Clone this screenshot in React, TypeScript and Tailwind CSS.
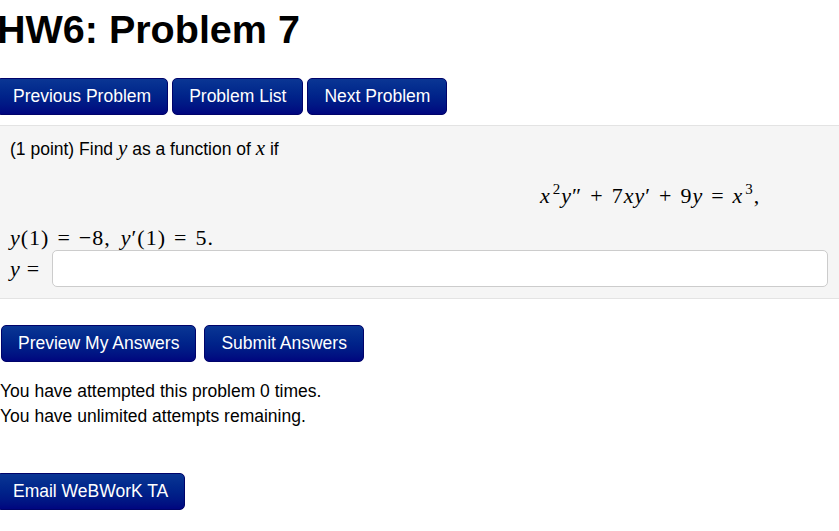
import React from "react";

const btn =
  "h-[37px] px-[16px] flex items-center rounded-[5px] border border-[#00036a] bg-gradient-to-b from-[#0b3694] to-[#00057f] text-white text-[17.5px] leading-[25px] whitespace-nowrap";

const math = "font-['Liberation_Serif',serif] text-[22px] tracking-[1px] whitespace-nowrap";

function V({ c }: { c: string }) {
  return <span className="italic">{c}</span>;
}

function Sup({ c }: { c: string }) {
  return <span className="relative -top-[9px] text-[15px] ml-[2px]">{c}</span>;
}

function Op({ c, w }: { c: string; w: string }) {
  return <span className={w}>{c}</span>;
}

export default function App() {
  return (
    <div className="w-[839px] h-[531px] overflow-hidden bg-white text-black font-['Liberation_Sans',Arial,sans-serif] text-[17.5px] leading-[25px]">
      <h1 className="pt-[7px] ml-[-3px] text-[39.5px] leading-[44px] font-bold whitespace-nowrap">HW6: Problem 7</h1>

      <div className="mt-[27px] ml-[-4px] flex gap-[4px]">
        <div className={btn}>Previous Problem</div>
        <div className={btn}>Problem List</div>
        <div className={btn}>Next Problem</div>
      </div>

      <div className="mt-[10px] border-y border-[#e3e3e3] bg-[#f5f5f5] pt-[11px] pb-[11px]">
        <div className="pl-[10px]">
          (1 point) Find{" "}
          <span className="font-['Liberation_Serif',serif] text-[21px] italic leading-[20px]">y</span> as a function of{" "}
          <span className="font-['Liberation_Serif',serif] text-[21px] italic leading-[20px]">x</span> if
        </div>

        <div className={`mt-[19px] pl-[540px] leading-[30px] ${math}`}>
          <V c="x" />
          <Sup c="2" />
          <V c="y" />
          <span>″</span>
          <Op c="+" w="mx-[8px]" />
          7<V c="x" />
          <V c="y" />
          <span>′</span>
          <Op c="+" w="mx-[8px]" />
          9<V c="y" />
          <Op c="=" w="mx-[8px]" />
          <V c="x" />
          <Sup c="3" />,
        </div>

        <div className={`mt-[12px] pl-[10px] leading-[25px] ${math}`}>
          <V c="y" />
          (1)
          <Op c="=" w="mx-[8px]" />
          −8,
          <span className="ml-[10px]" />
          <V c="y" />′(1)
          <Op c="=" w="mx-[8px]" />
          5.
        </div>

        <div className="flex items-center">
          <div className={`pl-[10px] w-[52px] leading-[25px] ${math}`}>
            <V c="y" />
            <Op c="=" w="ml-[6px]" />
          </div>
          <div className="h-[37px] w-[776px] rounded-[5px] border border-[#cccccc] bg-white" />
        </div>
      </div>

      <div className="mt-[26px] ml-[1px] flex gap-[8px]">
        <div className={btn}>Preview My Answers</div>
        <div className={btn}>Submit Answers</div>
      </div>

      <div className="mt-[17px]">
        <div>You have attempted this problem 0 times.</div>
        <div>You have unlimited attempts remaining.</div>
      </div>

      <div className="mt-[44px] ml-[-4px] flex">
        <div className={btn}>Email WeBWorK TA</div>
      </div>
    </div>
  );
}
